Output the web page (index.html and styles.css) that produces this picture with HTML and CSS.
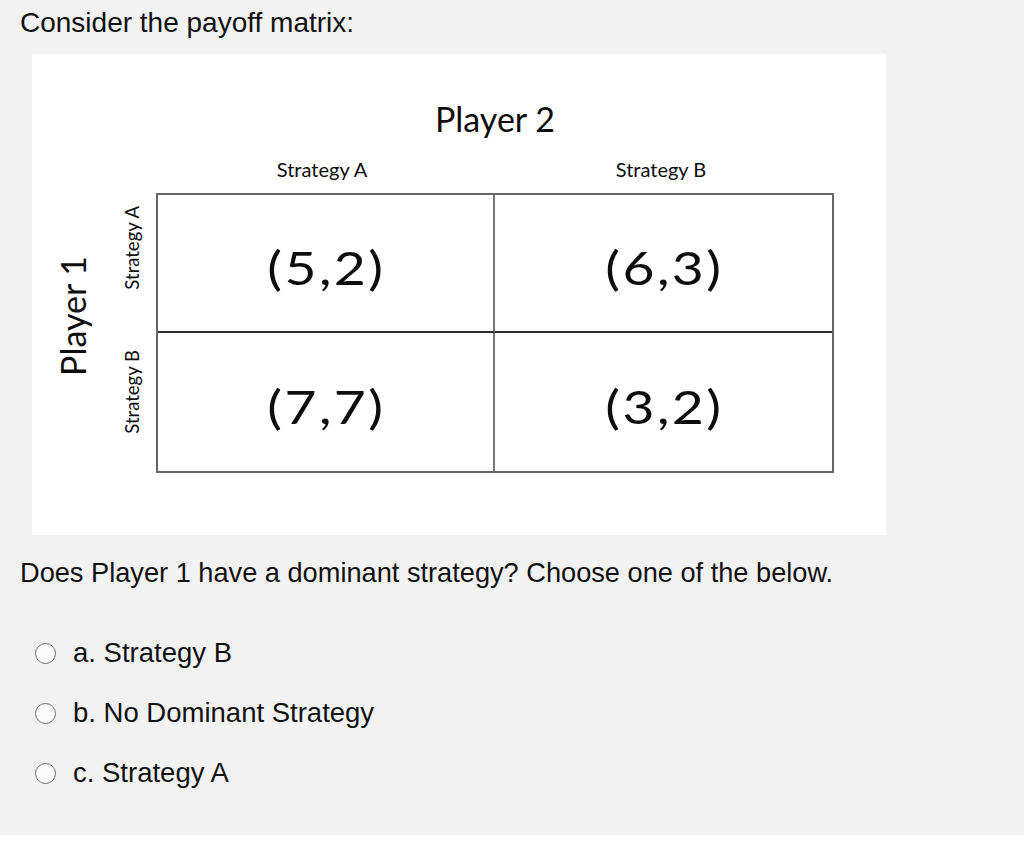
FILE: index.html
```html
<!DOCTYPE html>
<html lang="en">
<head>
<meta charset="utf-8">
<title>Payoff matrix question</title>
<link rel="stylesheet" href="styles.css">
</head>
<body>
<main class="page">
  <h1 class="prompt">Consider the payoff matrix:</h1>
  <figure class="figure">
    <div class="game">
      <div class="p2">Player 2</div>
      <div class="col-label col-a">Strategy A</div>
      <div class="col-label col-b">Strategy B</div>
      <div class="p1">Player 1</div>
      <div class="row-label row-a">Strategy A</div>
      <div class="row-label row-b">Strategy B</div>
      <div class="matrix">
        <div class="cell c11"><span class="val">(5,2)</span></div>
        <div class="cell c12"><span class="val">(6,3)</span></div>
        <div class="cell c21"><span class="val">(7,7)</span></div>
        <div class="cell c22"><span class="val">(3,2)</span></div>
      </div>
    </div>
  </figure>
  <p class="question">Does Player 1 have a dominant strategy? Choose one of the below.</p>
  <ul class="options">
    <li class="option"><span class="radio"></span><span class="opt-text">a. Strategy B</span></li>
    <li class="option"><span class="radio"></span><span class="opt-text">b. No Dominant Strategy</span></li>
    <li class="option"><span class="radio"></span><span class="opt-text">c. Strategy A</span></li>
  </ul>
</main>
</body>
</html>
```

FILE: styles.css
```css
html, body {
  margin: 0;
  padding: 0;
  background: #ffffff;
}

.page {
  background: #f2f2f2;
  padding: 6px 20px 45px 20px;
  font-family: "Liberation Sans", Arial, sans-serif;
  color: #111;
}

.prompt {
  margin: 0;
  font-size: 28px;
  line-height: 34px;
  font-weight: normal;
}

.figure {
  margin: 14px 0 0 12px;
  width: 854px;
  height: 481px;
  background: #ffffff;
  box-sizing: border-box;
  padding-top: 46px;
}

.game {
  display: grid;
  grid-template-columns: 88px 36px 339px 339px;
  grid-template-rows: 57px 36px 140px 140px;
  font-family: Lato, "Open Sans", sans-serif;
  color: #0d0d0d;
}

.p2 {
  grid-column: 3 / 5;
  grid-row: 1;
  justify-self: center;
  font-size: 34px;
  line-height: 40px;
  align-self: start;
  margin-top: -1px;
}

.col-label {
  grid-row: 2;
  justify-self: center;
  align-self: start;
  font-size: 20px;
  line-height: 24px;
  padding-right: 7px;
}
.col-a { grid-column: 3; }
.col-b { grid-column: 4; }

.p1 {
  grid-column: 1;
  grid-row: 3 / 5;
  writing-mode: vertical-rl;
  transform: rotate(180deg);
  font-size: 34px;
  line-height: 40px;
  justify-self: start;
  align-self: center;
  margin-left: 21px;
  margin-top: -34px;
}

.row-label {
  grid-column: 2;
  writing-mode: vertical-rl;
  transform: rotate(180deg);
  font-size: 18.5px;
  line-height: 22px;
  justify-self: start;
  align-self: start;
  margin-left: 1px;
}
.row-a { grid-row: 3; margin-top: 13px; }
.row-b { grid-row: 4; margin-top: 17px; }

.matrix {
  grid-column: 3 / 5;
  grid-row: 3 / 5;
  display: grid;
  grid-template-columns: 1fr 1fr;
  grid-template-rows: 1fr 1fr;
  border: 2px solid #666;
  box-sizing: border-box;
  background: #fff;
}

.cell {
  display: flex;
  align-items: center;
  justify-content: center;
  font-size: 46px;
  line-height: 54px;
  padding-top: 10px;
  box-sizing: border-box;
}
.val {
  display: inline-block;
  letter-spacing: 2px;
  padding-left: 2px;
  transform: scaleX(1.2);
}
.c11, .c12 { border-bottom: 2px solid #2a2a2a; }
.c11, .c21 { border-right: 2px solid #7a7a7a; }

.question {
  margin: 21px 0 0 0;
  font-size: 27.2px;
  line-height: 34px;
}

.options {
  list-style: none;
  margin: 46px 0 0 0;
  padding: 0;
  display: flex;
  flex-direction: column;
  gap: 26px;
}

.option {
  display: flex;
  align-items: center;
  height: 34px;
  font-size: 27.5px;
  line-height: 34px;
}

.radio {
  width: 21px;
  height: 21px;
  box-sizing: border-box;
  border: 1.6px solid #707070;
  border-radius: 50%;
  background: #fbfbfb;
  margin-left: 15px;
  margin-right: 17px;
  flex: none;
}
```
